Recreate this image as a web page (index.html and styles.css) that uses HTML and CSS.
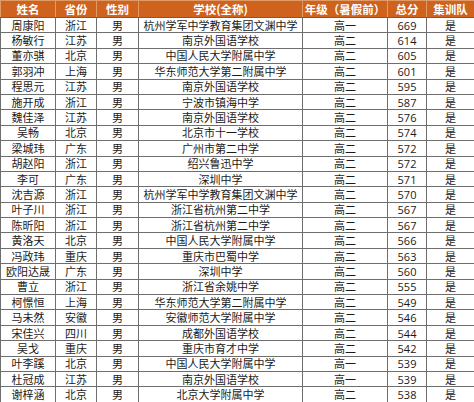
FILE: index.html
```html
<!DOCTYPE html>
<html lang="zh">
<head>
<meta charset="utf-8">
<link rel="stylesheet" href="styles.css">
</head>
<body>
<table class="rank">
<colgroup>
<col class="c-name"><col class="c-prov"><col class="c-sex"><col class="c-school"><col class="c-grade"><col class="c-score"><col class="c-team">
</colgroup>
<thead>
<tr><th>姓名</th><th>省份</th><th>性别</th><th>学校(全称)</th><th>年级（暑假前）</th><th>总分</th><th>集训队</th></tr>
</thead>
<tbody>
<tr><td>周康阳</td><td>浙江</td><td>男</td><td>杭州学军中学教育集团文渊中学</td><td>高一</td><td class="num">669</td><td>是</td></tr>
<tr><td>杨敏行</td><td>江苏</td><td>男</td><td>南京外国语学校</td><td>高二</td><td class="num">614</td><td>是</td></tr>
<tr><td>董亦骐</td><td>北京</td><td>男</td><td>中国人民大学附属中学</td><td>高二</td><td class="num">605</td><td>是</td></tr>
<tr><td>郭羽冲</td><td>上海</td><td>男</td><td>华东师范大学第二附属中学</td><td>高二</td><td class="num">601</td><td>是</td></tr>
<tr><td>程思元</td><td>江苏</td><td>男</td><td>南京外国语学校</td><td>高二</td><td class="num">595</td><td>是</td></tr>
<tr><td>施开成</td><td>浙江</td><td>男</td><td>宁波市镇海中学</td><td>高二</td><td class="num">587</td><td>是</td></tr>
<tr><td>魏佳泽</td><td>江苏</td><td>男</td><td>南京外国语学校</td><td>高二</td><td class="num">576</td><td>是</td></tr>
<tr><td>吴畅</td><td>北京</td><td>男</td><td>北京市十一学校</td><td>高二</td><td class="num">574</td><td>是</td></tr>
<tr><td>梁城玮</td><td>广东</td><td>男</td><td>广州市第二中学</td><td>高二</td><td class="num">572</td><td>是</td></tr>
<tr><td>胡赵阳</td><td>浙江</td><td>男</td><td>绍兴鲁迅中学</td><td>高二</td><td class="num">572</td><td>是</td></tr>
<tr><td>李可</td><td>广东</td><td>男</td><td>深圳中学</td><td>高二</td><td class="num">571</td><td>是</td></tr>
<tr><td>沈吉源</td><td>浙江</td><td>男</td><td>杭州学军中学教育集团文渊中学</td><td>高二</td><td class="num">570</td><td>是</td></tr>
<tr><td>叶子川</td><td>浙江</td><td>男</td><td>浙江省杭州第二中学</td><td>高二</td><td class="num">567</td><td>是</td></tr>
<tr><td>陈昕阳</td><td>浙江</td><td>男</td><td>浙江省杭州第二中学</td><td>高二</td><td class="num">567</td><td>是</td></tr>
<tr><td>黄洛天</td><td>北京</td><td>男</td><td>中国人民大学附属中学</td><td>高二</td><td class="num">566</td><td>是</td></tr>
<tr><td>冯政玮</td><td>重庆</td><td>男</td><td>重庆市巴蜀中学</td><td>高二</td><td class="num">563</td><td>是</td></tr>
<tr><td>欧阳达晟</td><td>广东</td><td>男</td><td>深圳中学</td><td>高二</td><td class="num">560</td><td>是</td></tr>
<tr><td>曹立</td><td>浙江</td><td>男</td><td>浙江省余姚中学</td><td>高二</td><td class="num">555</td><td>是</td></tr>
<tr><td>柯憬恒</td><td>上海</td><td>男</td><td>华东师范大学第二附属中学</td><td>高二</td><td class="num">549</td><td>是</td></tr>
<tr><td>马未然</td><td>安徽</td><td>男</td><td>安徽师范大学附属中学</td><td>高二</td><td class="num">546</td><td>是</td></tr>
<tr><td>宋佳兴</td><td>四川</td><td>男</td><td>成都外国语学校</td><td>高二</td><td class="num">544</td><td>是</td></tr>
<tr><td>吴戈</td><td>重庆</td><td>男</td><td>重庆市育才中学</td><td>高二</td><td class="num">542</td><td>是</td></tr>
<tr><td>叶李蹊</td><td>北京</td><td>男</td><td>中国人民大学附属中学</td><td>高一</td><td class="num">539</td><td>是</td></tr>
<tr><td>杜冠成</td><td>江苏</td><td>男</td><td>南京外国语学校</td><td>高一</td><td class="num">539</td><td>是</td></tr>
<tr><td>谢梓涵</td><td>北京</td><td>男</td><td>北京大学附属中学</td><td>高二</td><td class="num">538</td><td>是</td></tr>
</tbody>
</table>
</body>
</html>
```
FILE: styles.css
```css
html, body {
  margin: 0;
  padding: 0;
  background: #ffffff;
}
.rank {
  width: 474px;
  table-layout: fixed;
  border-collapse: collapse;
  font-family: "Noto Sans CJK SC", "Noto Sans", sans-serif;
  font-size: 11px;
  color: #1a1a1a;
}
.c-name { width: 55px; }
.c-prov { width: 41px; }
.c-sex { width: 42px; }
.c-school { width: 164px; }
.c-grade { width: 85px; }
.c-score { width: 39px; }
.c-team { width: 48px; }
.rank thead tr { height: 17px; }
.rank tbody tr { height: 15.4px; }
.rank th {
  padding: 0;
  background: #cf621c;
  color: #ffffff;
  font-weight: bold;
  font-size: 11.5px;
  line-height: 12px;
  height: 15px;
  text-align: center;
  border: 1px solid #e09a66;
  border-bottom: 1px solid #7a5a44;
  white-space: nowrap;
  overflow: hidden;
}
.rank td {
  padding: 0;
  line-height: 11px;
  height: 13px;
  text-align: center;
  border: 1px solid #6e6e6e;
  white-space: nowrap;
  overflow: hidden;
}
.rank td.num {
  font-family: "Open Sans", "Noto Sans", sans-serif;
  font-size: 11px;
}
```
